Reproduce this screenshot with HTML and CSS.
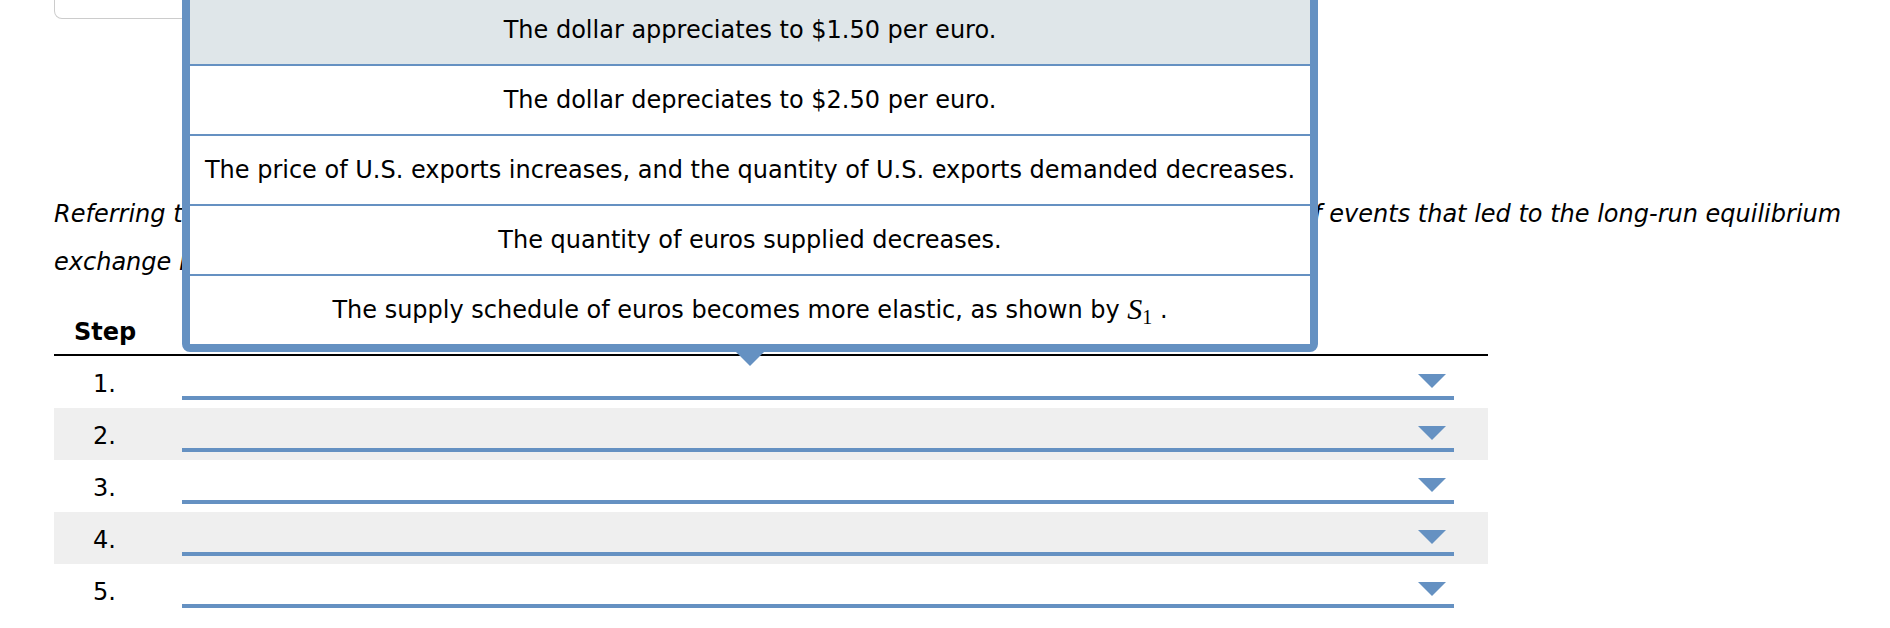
FILE: index.html
```html
<!DOCTYPE html>
<html lang="en">
<head>
  <meta charset="UTF-8">
  <title>Exchange Rate Steps</title>
  <link rel="stylesheet" href="styles.css">
</head>
<body>
  <div class="page">
    <div class="graph-box"></div>
    <p class="prompt">Referring to the graph above, place the following events in the correct order to illustrate the sequence of events that led to the long-run equilibrium exchange rate.</p>

    <div class="steps">
      <div class="steps-head">Step</div>
      <div class="step-row"><span class="step-num">1.</span><div class="select"><span class="caret"></span></div></div>
      <div class="step-row alt"><span class="step-num">2.</span><div class="select"><span class="caret"></span></div></div>
      <div class="step-row"><span class="step-num">3.</span><div class="select"><span class="caret"></span></div></div>
      <div class="step-row alt"><span class="step-num">4.</span><div class="select"><span class="caret"></span></div></div>
      <div class="step-row"><span class="step-num">5.</span><div class="select"><span class="caret"></span></div></div>
    </div>

    <div class="menu">
      <div class="option hover">The dollar appreciates to $1.50 per euro.</div>
      <div class="option">The dollar depreciates to $2.50 per euro.</div>
      <div class="option">The price of U.S. exports increases, and the quantity of U.S. exports demanded decreases.</div>
      <div class="option">The quantity of euros supplied decreases.</div>
      <div class="option">The supply schedule of euros becomes more elastic, as shown by&nbsp;<span class="math"><i>S</i><sub>1</sub></span>&nbsp;.</div>
      <span class="menu-tip"></span>
    </div>
  </div>
</body>
</html>
```

FILE: styles.css
```css
body { margin: 0; background: #fff; color: #000; font-family: "DejaVu Sans", Verdana, sans-serif; font-size: 24px; }
.page { position: relative; padding: 0 20px 0 54px; }

.graph-box { width: 400px; height: 18px; border: 1px solid #ccc; border-top: 0; border-radius: 0 0 8px 8px; }

.prompt { margin: 171px 0 0; font-style: italic; line-height: 48px; }

.steps { width: 1434px; margin-top: 32px; }
.steps-head { font-weight: bold; line-height: 28px; padding: 0 0 8px 20px; border-bottom: 2px solid #000; }
.step-row { display: grid; grid-template-columns: 128px 1272px; height: 52px; }
.step-row.alt { background: #efefef; }
.step-num { padding: 14px 0 0 39px; line-height: 28px; }
.select { position: relative; height: 40px; border-bottom: 4px solid #6591c2; }
.caret { position: absolute; right: 8px; top: 18px; border-left: 14px solid transparent; border-right: 14px solid transparent; border-top: 14px solid #6591c2; }

.menu { position: absolute; top: -12px; left: 182px; width: 1136px; box-sizing: border-box; border: 8px solid #6591c2; border-radius: 0 0 8px 8px; background: #fff; }
.option { height: 68px; display: flex; align-items: center; justify-content: center; white-space: pre; border-bottom: 2px solid #6591c2; }
.option:last-of-type { border-bottom: 0; }
.option.hover { background: #dfe6e9; }
.math { font-family: "Liberation Serif", "Times New Roman", serif; font-size: 30px; }
.math sub { font-size: 20px; vertical-align: -5px; }
.menu-tip { position: absolute; top: 100%; left: 50%; margin: 8px 0 0 -14px; border-left: 14px solid transparent; border-right: 14px solid transparent; border-top: 14px solid #6591c2; }
```
